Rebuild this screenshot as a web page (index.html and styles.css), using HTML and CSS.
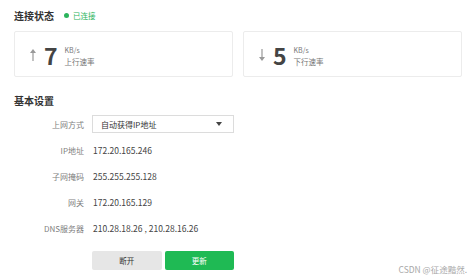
FILE: index.html
```html
<!DOCTYPE html>
<html lang="zh-CN">
<head>
    <meta charset="UTF-8">
    <meta name="viewport" content="width=device-width, initial-scale=1.0">
    <title>网络设置</title>
    <link rel="stylesheet" href="styles.css">
</head>
<body>
    <div class="page">
        <!-- 连接状态 -->
        <div class="status-head">
            <h2 class="section-title">连接状态</h2>
            <span class="status-dot"></span>
            <span class="status-text">已连接</span>
        </div>

        <div class="cards">
            <div class="card">
                <svg class="arrow" width="6" height="12" viewBox="0 0 6 12">
                    <path d="M3 0 L6 4 L3.6 4 L3.6 12 L2.4 12 L2.4 4 L0 4 Z" fill="#999"/>
                </svg>
                <span class="speed">7</span>
                <div class="speed-info">
                    <span class="unit">KB/s</span>
                    <span class="speed-label">上行速率</span>
                </div>
            </div>
            <div class="card">
                <svg class="arrow" width="6" height="12" viewBox="0 0 6 12">
                    <path d="M3 12 L6 8 L3.6 8 L3.6 0 L2.4 0 L2.4 8 L0 8 Z" fill="#999"/>
                </svg>
                <span class="speed">5</span>
                <div class="speed-info">
                    <span class="unit">KB/s</span>
                    <span class="speed-label">下行速率</span>
                </div>
            </div>
        </div>

        <!-- 基本设置 -->
        <h2 class="section-title settings-title">基本设置</h2>

        <div class="form">
            <div class="form-row">
                <span class="form-label">上网方式</span>
                <div class="select">
                    <span>自动获得IP地址</span>
                    <span class="caret"></span>
                </div>
            </div>
            <div class="form-row">
                <span class="form-label">IP地址</span>
                <span class="form-value">172.20.165.246</span>
            </div>
            <div class="form-row">
                <span class="form-label">子网掩码</span>
                <span class="form-value">255.255.255.128</span>
            </div>
            <div class="form-row">
                <span class="form-label">网关</span>
                <span class="form-value">172.20.165.129</span>
            </div>
            <div class="form-row">
                <span class="form-label">DNS服务器</span>
                <span class="form-value">210.28.18.26 , 210.28.16.26</span>
            </div>
            <div class="form-row buttons-row">
                <span></span>
                <div class="buttons">
                    <button class="btn btn-gray">断开</button>
                    <button class="btn btn-green">更新</button>
                </div>
            </div>
        </div>
    </div>

    <div class="watermark">CSDN @征途黯然.</div>
</body>
</html>
```

FILE: styles.css
```css
* {
    margin: 0;
    padding: 0;
    box-sizing: border-box;
    font-family: 'Noto Sans CJK SC', 'Noto Sans', sans-serif;
}

body {
    background-color: white;
    width: 474px;
    height: 278px;
    overflow: hidden;
    position: relative;
}

.page {
    padding: 5px 12px 0 14px;
}

.status-head {
    display: flex;
    align-items: center;
    height: 20px;
}

.section-title {
    font-size: 10px;
    font-weight: bold;
    color: #333;
}

.status-dot {
    width: 5px;
    height: 5px;
    border-radius: 50%;
    background-color: #2bb45c;
    margin-left: 10px;
}

.status-text {
    font-size: 7.5px;
    color: #2bb45c;
    margin-left: 4px;
}

.cards {
    display: grid;
    grid-template-columns: 1fr 1fr;
    gap: 10px;
    margin-top: 6px;
}

.card {
    height: 46px;
    border: 1px solid #ececec;
    border-radius: 2px;
    display: flex;
    align-items: center;
    padding-left: 15px;
    padding-top: 2px;
}

.speed {
    font-size: 23px;
    font-weight: bold;
    color: #444;
    margin-left: 8px;
    line-height: 1;
}

.speed-info {
    display: flex;
    flex-direction: column;
    margin-left: 7px;
    color: #777;
    line-height: 1.5;
    margin-top: 2px;
}

.unit {
    font-size: 7px;
}

.speed-label {
    font-size: 7.5px;
}

.settings-title {
    margin-top: 15px;
    line-height: 18px;
}

.form {
    margin-top: 1px;
}

.form-row {
    display: grid;
    grid-template-columns: 70px 142px;
    column-gap: 8px;
    align-items: center;
    height: 26px;
}

.form-label {
    text-align: right;
    font-size: 8px;
    color: #808080;
}

.form-value {
    font-size: 8.5px;
    color: #444;
    padding-left: 1px;
}

.select {
    height: 18px;
    border: 1px solid #dcdcdc;
    display: flex;
    align-items: center;
    justify-content: space-between;
    padding: 0 11px 0 8px;
    font-size: 8px;
    color: #333;
}

.caret {
    width: 0;
    height: 0;
    border-left: 3.5px solid transparent;
    border-right: 3.5px solid transparent;
    border-top: 4px solid #444;
}

.buttons-row {
    margin-top: 10px;
    height: 19px;
}

.buttons {
    display: flex;
    gap: 3px;
}

.btn {
    height: 19px;
    border: none;
    border-radius: 2px;
    font-size: 7.5px;
    flex: 1;
}

.btn-gray {
    background-color: #e6e6e6;
    color: #333;
}

.btn-green {
    background-color: #1fba54;
    color: white;
}

.watermark {
    position: absolute;
    right: 7px;
    bottom: 3px;
    font-size: 8.5px;
    color: #a8a8a8;
}
```
